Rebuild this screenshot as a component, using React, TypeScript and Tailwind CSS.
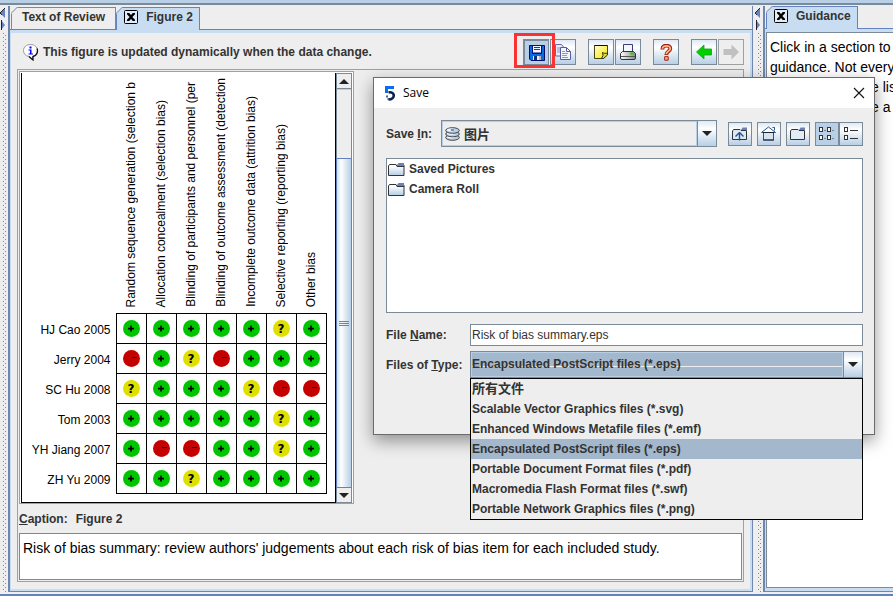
import type { ReactNode } from "react";
import { clsx } from "clsx";

type Judgement = "low" | "high" | "unclear";

const biasItems = [
  "Random sequence generation (selection b",
  "Allocation concealment (selection bias)",
  "Blinding of participants and personnel (per",
  "Blinding of outcome assessment (detection",
  "Incomplete outcome data (attrition bias)",
  "Selective reporting (reporting bias)",
  "Other bias",
];

const studies: { name: string; cells: Judgement[] }[] = [
  { name: "HJ Cao 2005", cells: ["low", "low", "low", "low", "low", "unclear", "low"] },
  { name: "Jerry 2004", cells: ["high", "low", "unclear", "high", "low", "low", "low"] },
  { name: "SC Hu 2008", cells: ["unclear", "low", "low", "low", "unclear", "high", "high"] },
  { name: "Tom 2003", cells: ["low", "low", "low", "low", "low", "unclear", "low"] },
  { name: "YH Jiang 2007", cells: ["low", "high", "high", "low", "low", "unclear", "low"] },
  { name: "ZH Yu 2009", cells: ["low", "low", "unclear", "low", "low", "low", "low"] },
];

const folders = ["Saved Pictures", "Camera Roll"];

const fileTypes = [
  "所有文件",
  "Scalable Vector Graphics files (*.svg)",
  "Enhanced Windows Metafile files (*.emf)",
  "Encapsulated PostScript files (*.eps)",
  "Portable Document Format files (*.pdf)",
  "Macromedia Flash Format files (*.swf)",
  "Portable Network Graphics files (*.png)",
];

const selectedType = "Encapsulated PostScript files (*.eps)";

/* ---------- icons ---------- */

function CloseBox() {
  return (
    <svg width="14" height="14" viewBox="0 0 14 14" aria-hidden="true">
      <rect x="0.5" y="0.5" width="13" height="13" rx="1" fill="#dfebf8" stroke="#000" />
      <path d="M3 3h2.2l1.8 2 1.8-2H11v1.2L8.4 7 11 9.8V11H8.8L7 9l-1.8 2H3V9.8L5.6 7 3 4.2z" fill="#000" />
    </svg>
  );
}

function InfoIcon() {
  return (
    <svg width="16" height="17" viewBox="0 0 16 17" aria-hidden="true">
      <path d="M7.5 0.5c4 0 7 2.5 7 6s-2.5 5.5-5 6V16L6 12.5c-3.500-.5-5.500-3-5.500-6 0-3.500 3-6 7-6z" fill="#fff" stroke="#999" />
      <path d="M14 4.500c1.500 4-1 7.500-4 8V16L6 12.500" fill="none" stroke="#111" strokeWidth="1.300" />
      <path d="M6.500 2.500h2v2h-2zM5.500 5.500h3v4h1.500v1H5.500v-1H7v-3H5.500z" fill="#00f" />
    </svg>
  );
}

function SaveIcon() {
  return (
    <svg width="16" height="16" viewBox="0 0 16 16" aria-hidden="true">
      <path d="M0.500 0.500h15v15H2l-1.500-1.500z" fill="#0a6ae0" stroke="#000a6a" />
      <path d="M3 0h10v9H3z" fill="#00187c" />
      <path d="M4 1h8v6.500H4z" fill="#f2f5ff" />
      <path d="M5 2.500h6M5 4.500h6" stroke="#223a8a" />
      <path d="M4 11h8v4H4z" fill="#f0f0f0" />
      <path d="M5 11h3v4H5z" fill="#12307a" />
      <path d="M10 11h2v4h-2z" fill="#b8b8b8" />
    </svg>
  );
}

function CopyIcon() {
  return (
    <svg width="16" height="16" viewBox="0 0 16 16" aria-hidden="true">
      <path d="M0.500 0.500h6l2.500 3v8.500H0.500z" fill="#e6ecf8" stroke="#6468a4" />
      <path d="M2 4h3M2 6h3M2 8h3" stroke="#8e96c4" />
      <path d="M5.500 3.500h6l4 4v8H5.500z" fill="#f2f5fc" stroke="#5a5e9c" />
      <path d="M11.500 3.500v4h4" fill="none" stroke="#5a5e9c" />
      <path d="M7 7.500h3M7 9.500h6M7 11.500h5M7 13.500h6" stroke="#8e96c4" />
    </svg>
  );
}

function NoteIcon() {
  return (
    <svg width="14" height="14" viewBox="0 0 14 14" aria-hidden="true">
      <path d="M0.500 0.500h13v9l-4 4h-9z" fill="url(#noteFill)" stroke="#4a4410" />
      <path d="M7.500 13.500l1.500-3-0.500-3c1.500 1 3 1 5 .5v2l-4 3.500z" fill="#e0d63a" stroke="#333300" />
      <path d="M0.500 0.500h13" stroke="#111" />
    </svg>
  );
}

function PrinterIcon() {
  return (
    <svg width="16" height="16" viewBox="0 0 16 16" aria-hidden="true">
      <path d="M3.500 7.500v-7h9v7" fill="#f2f6fd" stroke="#3c3c78" />
      <path d="M2.500 7.500h11l2 2v4.500q0 1.500-1.500 1.500H2q-1.500 0-1.500-1.500V9.500z" fill="url(#printerFill)" stroke="#333" />
      <path d="M1 12.500h14" stroke="#555" />
      <path d="M10 8.500h4v2h-4z" fill="#3cc81e" />
    </svg>
  );
}

function HelpIcon() {
  return (
    <svg width="13" height="17" viewBox="0 0 13 17" aria-hidden="true">
      <path d="M2.500 5.500V4.500c0-3.800 7.800-3.800 7.800 0 0 3-4 2.500-4 6.500" fill="none" stroke="#a01c08" strokeWidth="3.800" />
      <path d="M2.500 4.800V4.500c0-3.500 7.800-3.500 7.800 0 0 3-4 2.500-4 5.700" fill="none" stroke="#ffb48a" strokeWidth="1.800" />
      <path d="M4.700 12.700h3.500v3.500h-3.500z" fill="#ffb48a" stroke="#a01c08" />
    </svg>
  );
}

function ArrowIcon({ right }: { right?: boolean }) {
  return (
    <svg width="16" height="16" viewBox="0 0 16 16" aria-hidden="true">
      {right ? (
        <path d="M16 8L8.500 0.500V5H0.500v6h8v4.500z" fill="#c0c0c0" />
      ) : (
        <path d="M0.500 8L8 1v4h7.500v6H8v4z" fill="#00d000" stroke="#14a014" strokeWidth="0.800" />
      )}
    </svg>
  );
}

function FolderIcon() {
  return (
    <svg width="17" height="14" viewBox="0 0 17 14" aria-hidden="true">
      <path d="M1 4h15v9H1z" fill="url(#folderFill)" />
      <path d="M0.500 13.500V4l1-1.500h6.500l1 2h7" fill="none" stroke="#333" />
      <path d="M0.500 13.500h15.500V3" fill="none" stroke="#333" />
      <path d="M9 3l1.500-2H16v3H9z" fill="#6382bf" />
    </svg>
  );
}

function DiskIcon() {
  return (
    <svg width="15" height="14" viewBox="0 0 15 14" aria-hidden="true">
      {[10.5, 7, 3.5].map((y) => (
        <g key={y}>
          <ellipse cx="7.500" cy={y} rx="6.800" ry="2.800" fill="#b8cfe5" stroke="#333" strokeWidth="0.900" />
          <ellipse cx="6" cy={y - 0.5} rx="4" ry="1.400" fill="#f4f8fc" />
        </g>
      ))}
      <ellipse cx="7.500" cy="3" rx="2" ry="0.900" fill="#6382bf" />
    </svg>
  );
}

function UpFolderIcon() {
  return (
    <svg width="16" height="14" viewBox="0 0 16 14" aria-hidden="true">
      <path d="M0.500 12.500V4l1-1.500h6.500l1 1h5.500v9z" fill="#dce8f4" stroke="#333" />
      <path d="M9 3l1.500-2.500H15V3z" fill="#6382bf" />
      <path d="M7.500 13.500V6M7.500 5.500l-4 4M7.500 5.500l4 4" fill="none" stroke="#24548c" strokeWidth="1.400" />
    </svg>
  );
}

function HomeIcon() {
  return (
    <svg width="16" height="15" viewBox="0 0 16 15" aria-hidden="true">
      <path d="M0.500 6.500L7.500 1l7 5.500z" fill="#fff" stroke="#24548c" />
      <path d="M11.500 1.500h2v3" fill="none" stroke="#24548c" />
      <path d="M2.500 6.500v7.500h10V6.500" fill="#d6e4f2" stroke="#24548c" />
      <path d="M2 6.500h11M2 14h11" stroke="#222" />
    </svg>
  );
}

function NewFolderIcon() {
  return (
    <svg width="16" height="14" viewBox="0 0 16 14" aria-hidden="true">
      <path d="M0.500 12.500V4l1-1.500h6.500l1 1h5.500v9z" fill="#e2ecf6" stroke="#333" />
      <path d="M9 3l1.500-2.500H15V3z" fill="#6382bf" />
    </svg>
  );
}

function GridIcon() {
  return (
    <svg width="16" height="14" viewBox="0 0 16 14" aria-hidden="true">
      {[0.5, 8.5].map((y) =>
        [0.5, 8.5].map((x) => (
          <g key={`${x}-${y}`}>
            <rect x={x} y={y} width="3" height="4" fill="#fff" stroke="#333" />
            <path d={`M${x + 5} ${y + 3}h1`} stroke="#333" />
          </g>
        ))
      )}
    </svg>
  );
}

function DetailsIcon() {
  return (
    <svg width="15" height="14" viewBox="0 0 15 14" aria-hidden="true">
      {[0.5, 8.5].map((y) => (
        <g key={y}>
          <rect x="0.500" y={y} width="3" height="4" fill="#fff" stroke="#333" />
          <path d={`M6 ${y + 3}h8`} stroke="#333" />
        </g>
      ))}
    </svg>
  );
}

function AppLogo() {
  return (
    <svg width="10" height="15" viewBox="0 0 10 15" aria-hidden="true">
      <path d="M0 0h9v3H3v4H0z" fill="#0a6cf5" />
      <path d="M3.500 6.500c7-1.500 7 7 0 7" fill="none" stroke="#10204e" strokeWidth="2.600" />
      <path d="M1 9.500h2v2H1zM2.500 12h1.500v2H2.500z" fill="#3b5fae" />
    </svg>
  );
}

function Caret({ up }: { up?: boolean }) {
  return (
    <svg width="10" height="5" viewBox="0 0 10 5" aria-hidden="true">
      <path d={up ? "M0 5L5 0l5 5z" : "M0 0h10L5 5z"} fill="#222" />
    </svg>
  );
}

/* ---------- building blocks ---------- */

function Splitter() {
  return (
    <div className="w-2 shrink-0 overflow-hidden" role="separator">
      <svg width="8" height="100%" aria-hidden="true">
        <defs>
          <pattern id="bumps" width="4" height="4" patternUnits="userSpaceOnUse">
            <rect x="3" y="0" width="1" height="1" fill="#7f8b98" />
            <rect x="1" y="2" width="1" height="1" fill="#7f8b98" />
          </pattern>
        </defs>
        <rect x="2" y="28" width="4" height="100%" fill="url(#bumps)" />
        <path d="M5 3v10L0 8z" fill="#6382bf" />
        <path d="M5 3L0 8l2 2" fill="none" stroke="#222" />
        <path d="M1 15v10l4-5z" fill="#6382bf" />
        <path d="M1.500 15v10" stroke="#222" />
      </svg>
    </div>
  );
}

function Tab({ label, active }: { label: string; active?: boolean }) {
  return (
    <button
      role="tab"
      aria-selected={!!active}
      className={clsx(
        "relative flex items-center border-x border-t pb-1 font-bold",
        active ? "z-10 -mb-px gap-2 border-[#6382bf] bg-[#c8ddf2] pr-[6px] pl-[7px]" : "border-[#7a8a99] bg-[#eeeeee] px-[10px]"
      )}
    >
      <svg className="absolute -top-px -left-px" width="7" height="7" viewBox="0 0 7 7" aria-hidden="true">
        <path d="M0 0h7L0 7z" fill="#eee" />
        <path d="M0 6.500L6.500 0" stroke={active ? "#6382bf" : "#7a8a99"} />
      </svg>
      {active && <CloseBox />}
      {label}
    </button>
  );
}

function ToolButton({
  label,
  children,
  pressed,
  disabled,
}: {
  label: string;
  children: ReactNode;
  pressed?: boolean;
  disabled?: boolean;
}) {
  return (
    <button
      aria-label={label}
      disabled={disabled}
      className={clsx(
        "flex size-[26px] items-center justify-center border",
        pressed && "border-t-2 border-l-2 border-[#7a8a99] bg-[#b8cfe5]",
        disabled && "border-[#a0a0a0] bg-[#eeeeee]",
        !pressed && !disabled && "border-[#7a8a99] bg-linear-to-b from-[#dfe9f3] via-white via-30% to-[#b8cfe5]"
      )}
    >
      {children}
    </button>
  );
}

function ChooserButton({ label, children, pressed }: { label: string; children: ReactNode; pressed?: boolean }) {
  return (
    <button
      type="button"
      aria-label={label}
      className={clsx(
        "flex size-6 items-center justify-center border border-[#7a8a99]",
        pressed ? "bg-[#b8cfe5]" : "bg-linear-to-b from-[#dfe9f3] via-white via-30% to-[#b8cfe5]"
      )}
    >
      {children}
    </button>
  );
}

function ComboArrow() {
  return (
    <span className="pointer-events-none flex w-[19px] items-center justify-center border-l border-[#7a8a99] bg-linear-to-b from-[#dfe9f3] via-white via-30% to-[#b8cfe5]">
      <Caret />
    </span>
  );
}

function JudgementMark({ value }: { value: Judgement }) {
  if (value === "unclear") {
    return (
      <span className="mx-auto flex size-[17px] items-center justify-center rounded-full bg-[#e0e000] font-['DejaVu_Sans',sans-serif] text-[12px] leading-none font-bold">
        ?
      </span>
    );
  }
  return (
    <svg
      className="mx-auto block"
      width="17"
      height="17"
      viewBox="0 0 17 17"
      role="img"
      aria-label={value === "low" ? "Low risk" : "High risk"}
    >
      <circle cx="8.500" cy="8.500" r="8.500" fill={value === "low" ? "#00c400" : "#c40000"} />
      {value === "low" ? (
        <path d="M5 7.800h6v1.600H5zM7.200 5.500h1.600v6H7.200z" fill="#000" />
      ) : (
        <path d="M9 7h5v1H9z" fill="#000" />
      )}
    </svg>
  );
}

function RiskOfBiasTable() {
  return (
    <table className="table-fixed border-collapse text-[12px] text-black">
      <colgroup>
        <col className="w-[94px]" />
        {biasItems.map((item) => (
          <col key={item} className="w-[30px]" />
        ))}
      </colgroup>
      <thead>
        <tr>
          <td />
          {biasItems.map((item) => (
            <th key={item} scope="col" className="p-0 font-normal">
              <div className="flex h-[240px] items-end justify-center pb-[6px]">
                <span className="rotate-180 leading-[14px] whitespace-nowrap [writing-mode:vertical-rl]">{item}</span>
              </div>
            </th>
          ))}
        </tr>
      </thead>
      <tbody>
        {studies.map((study) => (
          <tr key={study.name} className="h-[30px]">
            <th scope="row" className="p-0 pt-[2px] pr-[5px] text-right font-normal whitespace-nowrap">
              {study.name}
            </th>
            {study.cells.map((cell, i) => (
              <td key={i} className="border border-black p-0">
                <JudgementMark value={cell} />
              </td>
            ))}
          </tr>
        ))}
      </tbody>
    </table>
  );
}

function ScrollBar() {
  return (
    <div className="flex w-4 flex-col border border-[#7a8a99] bg-[#eeeeee]" aria-hidden="true">
      <div className="flex h-[15px] items-center justify-center border-b border-[#7a8a99]">
        <Caret up />
      </div>
      <div className="h-[69px] border-t border-[#b8cfe5]" />
      <div className="-mx-px flex flex-1 flex-col items-center justify-center gap-px border border-[#6382bf] bg-linear-to-r from-[#cfdfee] via-white via-30% to-[#b8cfe5]">
        <span className="h-px w-[10px] bg-[#6382bf]" />
        <span className="h-px w-[10px] bg-[#6382bf]" />
        <span className="h-px w-[10px] bg-[#6382bf]" />
      </div>
      <div className="flex h-[14px] items-center justify-center">
        <Caret />
      </div>
    </div>
  );
}

function Toolbar() {
  return (
    <div className="flex gap-3">
      <div className="relative flex gap-px">
        <ToolButton label="Save figure" pressed>
          <SaveIcon />
        </ToolButton>
        <ToolButton label="Copy">
          <CopyIcon />
        </ToolButton>
        <span className="pointer-events-none absolute -top-[6px] -left-[9px] h-[35px] w-[41px] border-3 border-[#fb3232]" />
      </div>
      <div className="flex gap-px">
        <ToolButton label="Note">
          <NoteIcon />
        </ToolButton>
        <ToolButton label="Print">
          <PrinterIcon />
        </ToolButton>
      </div>
      <ToolButton label="Help">
        <HelpIcon />
      </ToolButton>
      <div className="flex gap-px">
        <ToolButton label="Back">
          <ArrowIcon />
        </ToolButton>
        <ToolButton label="Forward" disabled>
          <ArrowIcon right />
        </ToolButton>
      </div>
    </div>
  );
}

function FigurePanel() {
  return (
    <section className="mt-px flex min-w-0 flex-1 flex-col border-r border-b border-l-2 border-[#6f86b0]">
      <div role="tablist" className="mt-px flex h-[23px] border-b border-[#6382bf] pl-px">
        <Tab label="Text of Review" />
        <Tab label="Figure 2" active />
      </div>
      <div className="flex flex-1 flex-col border-2 border-t-3 border-l border-[#c8ddf2]">
        <div className="flex items-center justify-between pt-[6px] pr-[6px] pb-1 pl-3">
          <p className="flex items-center gap-1 font-bold">
            <InfoIcon />
            This figure is updated dynamically when the data change.
          </p>
          <Toolbar />
        </div>
        <div className="mx-[6px] mb-[7px] flex flex-1 flex-col border border-[#a0a0a0] p-px">
          <div className="flex self-start border border-[#a0a0a0] bg-white px-px pt-px">
            <div className="border-x border-b border-black pr-2 pb-2">
              <RiskOfBiasTable />
            </div>
            <ScrollBar />
          </div>
          <label htmlFor="caption" className="flex h-[29px] items-center gap-2 font-bold">
            <span>
              <u>C</u>aption:
            </span>
            <span>Figure 2</span>
          </label>
          <textarea
            id="caption"
            className="block flex-1 resize-none border border-[#7a8a99] bg-white px-[3px] pt-[5px] text-[14px] leading-[18px] text-black outline-none"
            defaultValue="Risk of bias summary: review authors' judgements about each risk of bias item for each included study."
          />
        </div>
      </div>
    </section>
  );
}

function GuidancePanel() {
  return (
    <aside className="mt-px flex w-[130px] shrink-0 flex-col border-b border-l-2 border-[#6f86b0]">
      <div role="tablist" className="flex h-[23px] border-b border-[#6382bf] pl-px">
        <Tab label="Guidance" active />
      </div>
      <div className="flex flex-1 flex-col border-y-3 border-l border-[#c8ddf2]">
        <div className="flex-1 overflow-hidden border-y border-l border-[#7a8a99] bg-white pt-1 pl-[3px] text-[14px] leading-5 whitespace-nowrap text-black">
          <p>Click in a section to</p>
          <p>guidance. Not every</p>
          <p className="pl-[101px]">e lis</p>
          <p className="pl-[101px]">e a</p>
        </div>
      </div>
    </aside>
  );
}

function SaveDialog() {
  return (
    <div
      role="dialog"
      aria-labelledby="dialog-title"
      className="absolute top-[77px] left-[373px] z-20 w-[502px] border border-[#6b6b6b] bg-[#eeeeee] shadow-[0_6px_16px_rgba(0,0,0,0.4)]"
    >
      <header className="flex h-[30px] items-center gap-2 bg-white pr-[9px] pl-[11px] text-black">
        <AppLogo />
        <h1 id="dialog-title" className="flex-1 font-['Open_Sans',sans-serif] text-[12px]">
          Save
        </h1>
        <button aria-label="Close">
          <svg width="12" height="12" viewBox="0 0 12 12" aria-hidden="true">
            <path d="M1 1l10 10M11 1L1 11" stroke="#111" strokeWidth="1.100" />
          </svg>
        </button>
      </header>

      <form className="pt-3 pr-[11px] pb-14 pl-3 font-bold" onSubmit={(e) => e.preventDefault()}>
        <div className="flex items-center">
          <label htmlFor="save-in" className="w-[55px]">
            Save <u>I</u>n:
          </label>
          <div className="flex h-[27px] flex-1 border border-[#7a8a99]">
            <div className="flex flex-1 items-center gap-1 border border-[#b8cfe5] pl-[2px]">
              <DiskIcon />
              <select
                id="save-in"
                className="flex-1 appearance-none bg-transparent font-['Noto_Sans_CJK_SC',sans-serif] text-[13px] leading-5 font-bold outline-none"
              >
                <option>图片</option>
              </select>
            </div>
            <ComboArrow />
          </div>
          <div className="ml-[11px] flex gap-[5px]">
            <ChooserButton label="Up one level">
              <UpFolderIcon />
            </ChooserButton>
            <ChooserButton label="Home">
              <HomeIcon />
            </ChooserButton>
            <ChooserButton label="New folder">
              <NewFolderIcon />
            </ChooserButton>
            <div className="flex">
              <ChooserButton label="List" pressed>
                <GridIcon />
              </ChooserButton>
              <ChooserButton label="Details">
                <DetailsIcon />
              </ChooserButton>
            </div>
          </div>
        </div>

        <ul className="mt-[11px] h-[155px] border border-[#7a8a99] bg-white">
          {folders.map((folder) => (
            <li key={folder}>
              <button type="button" className="flex h-5 items-center gap-1 pl-px">
                <FolderIcon />
                {folder}
              </button>
            </li>
          ))}
        </ul>

        <div className="mt-[11px] flex items-center">
          <label htmlFor="file-name" className="w-[84px]">
            File <u>N</u>ame:
          </label>
          <input
            id="file-name"
            className="h-[22px] min-w-0 flex-1 border border-[#7a8a99] bg-white px-px text-[12px] font-normal outline-none"
            defaultValue="Risk of bias summary.eps"
          />
        </div>

        <div className="mt-[5px] flex items-center">
          <label htmlFor="file-type" className="w-[84px]">
            Files of <u>T</u>ype:
          </label>
          <div className="relative flex h-[27px] flex-1 border border-[#7a8a99]">
            <div className="relative flex flex-1 border border-[#b8cfe5] bg-[#a3b8cc]">
              <span className="absolute inset-x-0 top-[13px] h-px bg-[#eeeeee]" />
              <select
                id="file-type"
                defaultValue={selectedType}
                className="relative flex-1 appearance-none bg-transparent pb-[2px] font-bold outline-none"
              >
                {fileTypes.map((type) => (
                  <option key={type}>{type}</option>
                ))}
              </select>
            </div>
            <ComboArrow />
            <ul
              role="listbox"
              aria-label="Files of Type"
              className="absolute -inset-x-px top-[26px] border border-black bg-[#eeeeee]"
            >
              {fileTypes.map((type, i) => (
                <li
                  key={type}
                  role="option"
                  aria-selected={type === selectedType}
                  className={clsx("h-5 pl-px leading-5", i === 0 && "text-[13px]", type === selectedType && "bg-[#a3b8cc]")}
                >
                  {type}
                </li>
              ))}
            </ul>
          </div>
        </div>
      </form>
    </div>
  );
}

export default function App() {
  return (
    <div className="relative flex h-screen flex-col overflow-hidden border-b-2 border-[#6382bf] bg-[#eeeeee] font-['Liberation_Sans','Noto_Sans_CJK_SC',sans-serif] text-[12px] leading-4 text-[#333333]">
      <svg className="absolute size-0" aria-hidden="true">
        <linearGradient id="folderFill" x1="0" y1="0" x2="0" y2="1">
          <stop offset="0" stopColor="#fff" />
          <stop offset="1" stopColor="#b8cfe5" />
        </linearGradient>
        <linearGradient id="noteFill" x1="0" y1="0" x2="1" y2="1">
          <stop offset="0" stopColor="#fffde0" />
          <stop offset="0.6" stopColor="#fbf04a" />
        </linearGradient>
        <linearGradient id="printerFill" x1="0" y1="0" x2="1" y2="0">
          <stop offset="0" stopColor="#fff" />
          <stop offset="1" stopColor="#8a8a8a" />
        </linearGradient>
      </svg>
      <div className="h-[5px] shrink-0 border-b-2 border-[#7a8a99] bg-[#b8cfe5]" />
      <main className="flex min-h-0 flex-1 pb-[2px]">
        <Splitter />
        <FigurePanel />
        <div className="flex pl-[2px]">
          <Splitter />
        </div>
        <GuidancePanel />
      </main>
      <SaveDialog />
    </div>
  );
}
